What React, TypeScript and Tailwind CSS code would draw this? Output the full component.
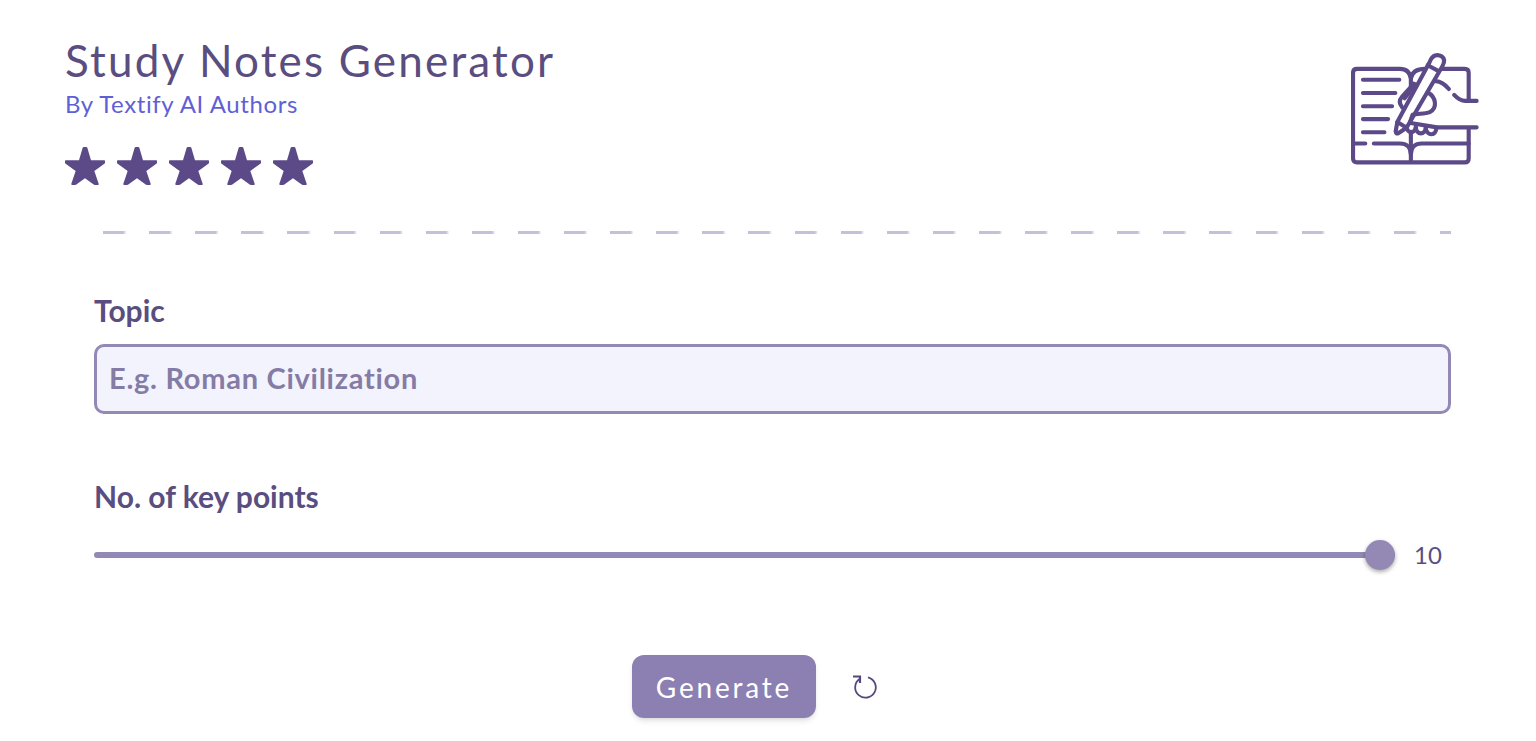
import { useState } from 'react';

const STARS = [1, 2, 3, 4, 5];

function StarIcon() {
    return (
        <svg viewBox="0 0 120 114" className="h-[38px] w-10" fill="#5b4a87" aria-hidden="true">
            <path d="M56 0h8q2 0 3 2l11 38h40q2 0 2 2v6q0 1-2 2L88 72l13 38q1 4-2 4h-9q-3 0-5-2L60 94 35 112q-2 2-5 2h-8q-4 0-3-4l13-38L2 50q-2-1-2-2v-6q0-2 2-2h40L53 2q1-2 3-2Z" />
        </svg>
    );
}

function NotesIcon() {
    return (
        <svg
            viewBox="44 36 387 345"
            className="h-[114px] w-32 shrink-0"
            fill="none"
            stroke="#5b4a87"
            strokeWidth="12.5"
            strokeLinecap="round"
            strokeLinejoin="round"
            aria-hidden="true"
        >
            {/* open book */}
            <path d="M225 116C222 98 210 87 192 87H62Q50 87 50 99V358Q50 370 62 370H388Q400 370 400 358V266" />
            <path d="M225 142V116C228 98 242 87 268 87" />
            <path d="M320 87H388Q400 87 400 99V184" />
            <path d="M225 280V366" />
            <path d="M50 313H87" />
            <path d="M113 313H192C212 313 225 324 225 346C225 324 238 313 258 313H400" />
            <path d="M80 120H190M80 160H178M80 200H168M80 239H156M80 279H145" />
            {/* hand */}
            <path d="M300 124C317 125 327 132 340 148" />
            <path d="M356 166C367 178 376 184 390 184H424" />
            <path d="M424 264H304L224 251" />
            <path d="M234 132L198 172C189 182 189 192 199 204" />
            <path d="M240 134L206 176" />
            <path d="M276 158C302 172 306 206 282 218C268 224 246 222 230 226L222 250" />
            <path d="M212 262C214 284 238 284 240 262" />
            <path d="M240 264C242 288 268 288 270 266" />
            <path d="M270 266C274 292 302 290 302 266" />
            {/* pen */}
            <path d="M184 248L282 66C290 44 306 42 318 49C328 56 327 68 320 80L212 265L188 281Q180 286 179 276Z" />
            <path d="M276 76L309 94M184 248L212 265" />
        </svg>
    );
}

function ResetIcon() {
    return (
        <svg viewBox="0 0 24 24" className="size-6" fill="none" stroke="#56487c" aria-hidden="true">
            <path d="M15 2.400A10.300 10.300 0 1 1 6.500 4" strokeWidth="1.800" />
            <path d="M0 1.500H7V8" strokeWidth="2.200" />
        </svg>
    );
}

export default function App() {
    const [topic, setTopic] = useState('');
    const [points, setPoints] = useState(10);

    const reset = () => {
        setTopic('');
        setPoints(10);
    };

    return (
        <main className="bg-white pt-[30px] pb-6 font-['Lato',sans-serif] text-[#5a4d80]">
            <header className="flex items-start justify-between pr-[57px] pl-[65px]">
                <div>
                    <h1 className="text-[44px] leading-[60px] tracking-wider">Study Notes Generator</h1>
                    <p className="text-2xl leading-7 tracking-wide text-[#5f5fd6]">By Textify AI Authors</p>
                    <div className="mt-[29px] flex gap-3" role="img" aria-label="5 out of 5 stars">
                        {STARS.map((star) => (
                            <StarIcon key={star} />
                        ))}
                    </div>
                </div>
                <div className="pt-[22px]">
                    <NotesIcon />
                </div>
            </header>

            <form className="mt-[46px] pr-[85px] pl-[94px]" onSubmit={(e) => e.preventDefault()}>
                <div className="ml-[9px] h-[3px] bg-[repeating-linear-gradient(90deg,#c5bfda_0%,#c5bfda_1.5%,transparent_1.75%,transparent_3.42%)]" />

                <label htmlFor="topic" className="mt-14 block text-[30px] leading-10 font-bold">
                    Topic
                </label>
                <input
                    id="topic"
                    type="text"
                    value={topic}
                    onChange={(e) => setTopic(e.target.value)}
                    placeholder="E.g. Roman Civilization"
                    className="mt-3.5 block h-[70px] w-full rounded-[10px] border-3 border-[#9488b5] bg-[#f3f3fe] px-3 pb-1 text-[29px] font-bold tracking-wide outline-none placeholder:text-[#857ca5]"
                />

                <label htmlFor="points" className="mt-[62px] block text-[30px] leading-10 font-bold">
                    No. of key points
                </label>
                <div className="mt-[19px] flex items-center">
                    <input
                        id="points"
                        type="range"
                        min={1}
                        max={10}
                        value={points}
                        onChange={(e) => setPoints(Number(e.target.value))}
                        className="h-[6px] flex-1 appearance-none rounded-full bg-[#9488b5] [&::-webkit-slider-thumb]:size-[30px] [&::-webkit-slider-thumb]:appearance-none [&::-webkit-slider-thumb]:rounded-full [&::-webkit-slider-thumb]:bg-[#9488b5] [&::-webkit-slider-thumb]:shadow-[0_2px_4px_rgba(0,0,0,0.35)]"
                    />
                    <output htmlFor="points" className="w-14 pl-[19px] text-2xl leading-10">
                        {points}
                    </output>
                </div>

                <div className="mt-20 flex items-center justify-center gap-[37px] pr-9">
                    <button
                        type="submit"
                        className="h-[63px] rounded-xl bg-[#8c80b3] px-6 text-[28px] tracking-widest text-white shadow-md"
                    >
                        Generate
                    </button>
                    <button type="button" onClick={reset} aria-label="Reset">
                        <ResetIcon />
                    </button>
                </div>
            </form>
        </main>
    );
}
